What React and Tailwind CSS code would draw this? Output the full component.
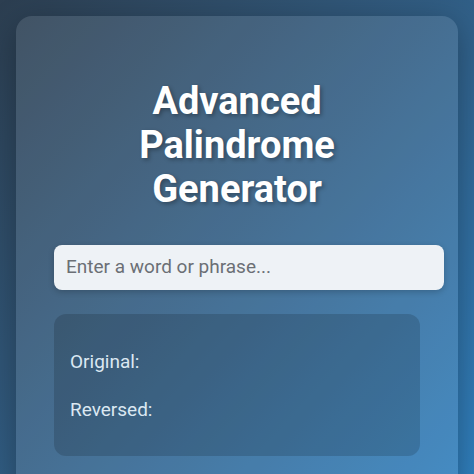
import React, { useState } from 'react';

const App = () => {
    const [text, setText] = useState('');

    const reversed = text.split('').reverse().join('');

    return (
        <div className="min-h-screen p-4 bg-gradient-to-br from-[#2c3e50] to-[#2f82c2] font-['Roboto',sans-serif]">
            <div className="rounded-2xl bg-white/10 px-[38px] pt-[63px] pb-10 shadow-[0_8px_32px_rgba(0,0,0,0.3)]">
                <h1 className="text-center text-[38px] leading-[44px] font-bold text-white [text-shadow:2px_2px_4px_rgba(0,0,0,0.3)]">
                    Advanced Palindrome Generator
                </h1>

                <input
                    className="box-content block w-full h-[21px] px-3 py-3 mt-[34px] rounded-lg bg-[#eef2f6] text-[19px] text-gray-800 placeholder:text-[#6b6f75] outline-none shadow-[0_2px_6px_rgba(0,0,0,0.2)]"
                    type="text"
                    value={text}
                    onChange={(e) => setText(e.target.value)}
                    placeholder="Enter a word or phrase..."
                />

                <div className="mt-6 flex flex-col gap-[21px] rounded-xl bg-black/15 px-4 pt-[34px] pb-[33px] text-[19px] leading-[27px] text-[#dce8f2]">
                    <p>Original: {text}</p>
                    <p>Reversed: {reversed}</p>
                </div>
            </div>
        </div>
    );
};

export default App;
